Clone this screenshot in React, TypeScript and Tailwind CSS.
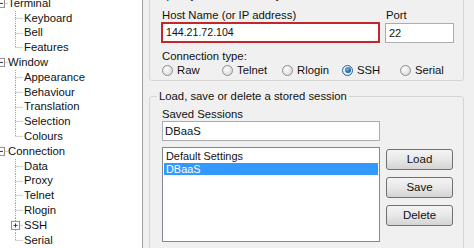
import React from 'react';

type TreeItem = {
  label: string;
  level: 0 | 1;
  last?: boolean;
  plus?: boolean;
};

const tree: TreeItem[] = [
  { label: 'Terminal', level: 0 },
  { label: 'Keyboard', level: 1 },
  { label: 'Bell', level: 1 },
  { label: 'Features', level: 1, last: true },
  { label: 'Window', level: 0 },
  { label: 'Appearance', level: 1 },
  { label: 'Behaviour', level: 1 },
  { label: 'Translation', level: 1 },
  { label: 'Selection', level: 1 },
  { label: 'Colours', level: 1, last: true },
  { label: 'Connection', level: 0 },
  { label: 'Data', level: 1 },
  { label: 'Proxy', level: 1 },
  { label: 'Telnet', level: 1 },
  { label: 'Rlogin', level: 1 },
  { label: 'SSH', level: 1, plus: true },
  { label: 'Serial', level: 1, last: true },
];

const H = 14.8;

const TreeLines = ({ item }: { item: TreeItem }) => {
  const mid = H / 2;
  if (item.level === 0) {
    return (
      <svg width="8" height={H} className="shrink-0 overflow-hidden">
        <rect x="-3.5" y={mid - 4} width="8" height="8" fill="#fff" stroke="#8c8c8c" />
        <line x1="-1" y1={mid} x2="3" y2={mid} stroke="#333" />
        <line x1="4.5" y1={mid} x2="8" y2={mid} stroke="#a0a0a0" strokeDasharray="1 1" />
      </svg>
    );
  }
  return (
    <svg width="24" height={H} className="shrink-0">
      <line
        x1="15.5"
        y1="0"
        x2="15.5"
        y2={item.last ? mid : H}
        stroke="#a0a0a0"
        strokeDasharray="1 1"
      />
      <line x1="15.5" y1={mid} x2="22.5" y2={mid} stroke="#a0a0a0" strokeDasharray="1 1" />
      {item.plus && (
        <>
          <rect x="11.5" y={mid - 4} width="8" height="8" fill="#fff" stroke="#8c8c8c" />
          <line x1="13.5" y1={mid} x2="17.5" y2={mid} stroke="#333" />
          <line x1="15.5" y1={mid - 2} x2="15.5" y2={mid + 2} stroke="#333" />
        </>
      )}
    </svg>
  );
};

const Radio = ({ label, checked }: { label: string; checked?: boolean }) => (
  <div className="flex items-center w-[60px] h-[14px]">
    {checked ? (
      <span className="w-[11px] h-[11px] rounded-full border border-[#2c628b] bg-[radial-gradient(circle_at_40%_35%,#ffffff,#c9ddef)] flex items-center justify-center">
        <span className="w-[6px] h-[6px] rounded-full bg-[radial-gradient(circle_at_40%_35%,#6cb4f0,#0b3566)]" />
      </span>
    ) : (
      <span className="w-[11px] h-[11px] rounded-full border border-[#8f8f8f] bg-[radial-gradient(circle_at_40%_35%,#ffffff,#cfcfcf)]" />
    )}
    <span className="ml-[4px]">{label}</span>
  </div>
);

const Button = ({ label }: { label: string }) => (
  <button className="w-[67px] h-[21px] rounded-[3px] border border-[#707070] bg-linear-to-b from-[#f4f4f4] via-[#e8e8e8] to-[#d4d4d4] text-[11.5px] leading-[19px] text-[#111]">
    {label}
  </button>
);

export default function App() {
  return (
    <div className="w-[474px] h-[248px] overflow-hidden flex font-['Liberation_Sans',Arial,sans-serif] text-[11.3px] leading-[13px] text-[#111]">
      <div className="w-[143px] shrink-0 bg-white border-r border-[#a0a0a0]">
        <div className="-mt-[4px]">
          {tree.map((item) => (
            <div key={item.label} className="flex items-center h-[14.8px] whitespace-nowrap">
              <TreeLines item={item} />
              <span>{item.label}</span>
            </div>
          ))}
        </div>
      </div>

      <div className="flex-1 bg-[#f0f0f0] pl-[6px]">
        <fieldset className="w-[315px] -mt-[11px] border border-[#d5d5d5] rounded-[3px] pl-[12px] pb-[3px]">
          <legend className="ml-[-5px] px-[2px] leading-[13px] whitespace-nowrap">
            Specify the destination you want to connect to
          </legend>
          <div className="flex gap-[5px] mt-[7px]">
            <div className="w-[219px] -ml-[1px]">
              <div className="h-[13px] pl-[1px]">Host Name (or IP address)</div>
              <div className="h-[21px] border-2 border-[#c4262e] bg-white pl-[3px] text-[10.6px] leading-[17px]">
                144.21.72.104
              </div>
            </div>
            <div className="w-[69px]">
              <div className="h-[13px] pl-[1px]">Port</div>
              <div className="h-[20px] mt-[1px] border border-[#abadb3] bg-white pl-[3px] text-[11px] leading-[18px]">
                22
              </div>
            </div>
          </div>
          <div className="mt-[6.5px] h-[13px]">Connection type:</div>
          <div className="flex mt-[0.5px]">
            <Radio label="Raw" />
            <Radio label="Telnet" />
            <Radio label="Rlogin" />
            <div className="w-[58px]">
              <Radio label="SSH" checked />
            </div>
            <Radio label="Serial" />
          </div>
        </fieldset>

        <fieldset className="w-[315px] mt-[8.5px] border border-[#d5d5d5] rounded-[3px] pl-[12px] h-[170px]">
          <legend className="ml-[-5px] px-[2px] leading-[13px] whitespace-nowrap">
            Load, save or delete a stored session
          </legend>
          <div className="mt-[5px] h-[13px]">Saved Sessions</div>
          <div className="w-[218px] h-[20px] mt-[0.5px] border border-[#abadb3] bg-white pl-[2px] leading-[18px]">
            DBaaS
          </div>
          <div className="flex gap-[6px] mt-[6px]">
            <div className="w-[218px] h-[95px] border border-[#828790] bg-white px-[1px] pt-[2px] text-[10.9px]">
              <div className="h-[13px] leading-[13px] pl-[2px]">Default Settings</div>
              <div className="h-[12px] leading-[12px] pl-[2px] bg-[#3399ff] text-white">DBaaS</div>
            </div>
            <div className="flex flex-col gap-[7px] mt-[2px]">
              <Button label="Load" />
              <Button label="Save" />
              <Button label="Delete" />
            </div>
          </div>
        </fieldset>
      </div>
    </div>
  );
}
